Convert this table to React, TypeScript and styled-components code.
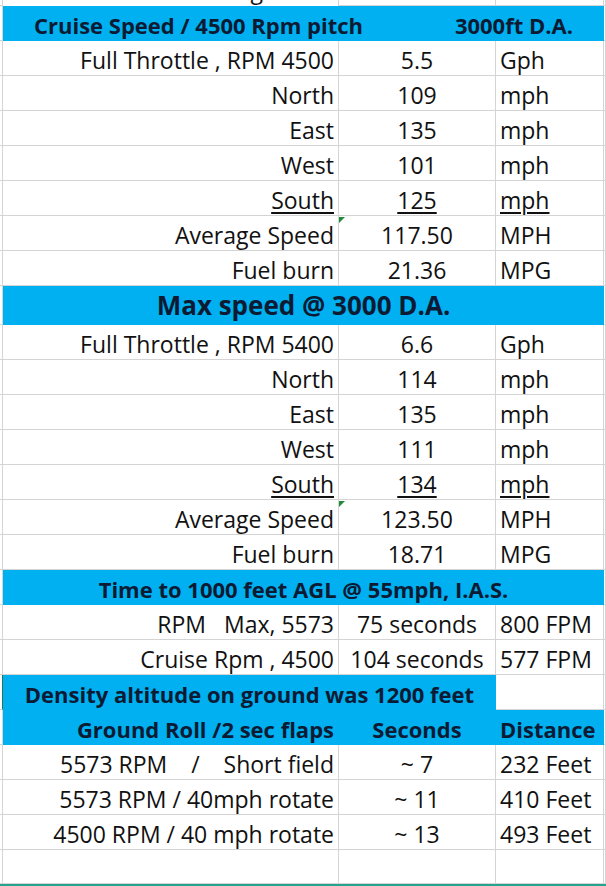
import styled, { createGlobalStyle, css } from "styled-components";

const GRID = "#d4d4d4";
const BLUE = "#00b0f0";
const INK = "#0c1b33";

type Align = "left" | "center" | "right";
type Line = { a: string; b: string; c: string; under?: boolean; flag?: boolean };

const cruise: Line[] = [
  { a: "Full Throttle , RPM 4500", b: "5.5", c: "Gph" },
  { a: "North", b: "109", c: "mph" },
  { a: "East", b: "135", c: "mph" },
  { a: "West", b: "101", c: "mph" },
  { a: "South", b: "125", c: "mph", under: true },
  { a: "Average Speed", b: "117.50", c: "MPH", flag: true },
  { a: "Fuel burn", b: "21.36", c: "MPG" },
];

const maxSpeed: Line[] = [
  { a: "Full Throttle , RPM 5400", b: "6.6", c: "Gph" },
  { a: "North", b: "114", c: "mph" },
  { a: "East", b: "135", c: "mph" },
  { a: "West", b: "111", c: "mph" },
  { a: "South", b: "134", c: "mph", under: true },
  { a: "Average Speed", b: "123.50", c: "MPH", flag: true },
  { a: "Fuel burn", b: "18.71", c: "MPG" },
];

const climb: Line[] = [
  { a: "RPM   Max, 5573", b: "75 seconds", c: "800 FPM" },
  { a: "Cruise Rpm , 4500", b: "104 seconds", c: "577 FPM" },
];

const roll: Line[] = [
  { a: "5573 RPM    /    Short field", b: "~ 7", c: "232 Feet" },
  { a: "5573 RPM / 40mph rotate", b: "~ 11", c: "410 Feet" },
  { a: "4500 RPM / 40 mph rotate", b: "~ 13", c: "493 Feet" },
];

const GlobalStyle = createGlobalStyle`
  *, *::before, *::after { box-sizing: border-box; }
  html, body { margin: 0; padding: 0; background: #fff; }
  body { font-family: "Open Sans", "Liberation Sans", sans-serif; }
`;

const Sheet = styled.div`
  width: 606px;
  height: 886px;
  overflow: hidden;
  color: #111;
  font-family: "Open Sans", "Liberation Sans", sans-serif;
`;

const Row = styled.div<{ $h?: number; $last?: boolean }>`
  display: grid;
  grid-template-columns: 3px 336px 157px 108px 2px;
  height: ${({ $h }) => $h ?? 35}px;
  ${({ $last }) =>
    $last &&
    css`
      border-bottom: 2px solid #25a38f;
    `}
`;

const Edge = styled.div<{ $mark?: boolean }>`
  border-right: 1px solid ${({ $mark }) => ($mark ? "#1d7a4c" : GRID)};
  border-bottom: 1px solid ${GRID};
`;

const justify = (a: Align) => (a === "left" ? "flex-start" : a === "right" ? "flex-end" : "center");

const Cell = styled.div<{ $align: Align; $head?: boolean; $under?: boolean; $flag?: boolean }>`
  position: relative;
  display: flex;
  align-items: flex-end;
  justify-content: ${({ $align }) => justify($align)};
  padding: 0 4px 3.5px 4px;
  border-right: 1px solid ${GRID};
  border-bottom: 1px solid ${GRID};
  font-size: 23px;
  line-height: 23px;
  white-space: pre;

  ${({ $head }) =>
    $head &&
    css`
      background: ${BLUE};
      border-color: ${BLUE};
      color: ${INK};
      font-weight: 700;
      font-size: 22px;
      line-height: 22px;
      padding-bottom: 4.5px;
    `}

  ${({ $under }) =>
    $under &&
    css`
      text-decoration: underline;
      text-decoration-thickness: 2px;
      text-underline-offset: 3px;
    `}

  ${({ $flag }) =>
    $flag &&
    css`
      &::before {
        content: "";
        position: absolute;
        top: 1px;
        left: 0;
        border-top: 6px solid #1f8a3a;
        border-right: 6px solid transparent;
      }
    `}
`;

const Peek = styled(Cell)`
  align-items: flex-start;
  overflow: hidden;
  border-bottom: none;
  padding-right: 75px;
`;

const PeekText = styled.span`
  margin-top: -21px;
`;

const Band = styled.div<{ $span: string; $align: Align; $size?: number; $pad?: number }>`
  grid-column: ${({ $span }) => $span};
  display: flex;
  align-items: flex-end;
  justify-content: ${({ $align }) => ($align === "left" ? "space-between" : justify($align))};
  padding: 0 ${({ $pad }) => $pad ?? 0}px ${({ $size }) => (($size ?? 22) > 23 ? 7 : 5)}px;
  background: ${BLUE};
  color: ${INK};
  font-weight: 700;
  font-size: ${({ $size }) => $size ?? 22}px;
  line-height: ${({ $size }) => $size ?? 22}px;
  white-space: pre;
`;

const DataRow = ({ line }: { line: Line }) => (
  <Row>
    <Edge />
    <Cell $align="right" $under={line.under}>
      {line.a}
    </Cell>
    <Cell $align="center" $under={line.under} $flag={line.flag}>
      {line.b}
    </Cell>
    <Cell $align="left" $under={line.under}>
      {line.c}
    </Cell>
    <Edge />
  </Row>
);

export default function App() {
  return (
    <>
      <GlobalStyle />
      <Sheet>
        <Row $h={6}>
          <Edge />
          <Peek $align="right">
            <PeekText>Climb testing</PeekText>
          </Peek>
          <Cell $align="center" />
          <Cell $align="left" />
          <Edge />
        </Row>

        <Row>
          <Edge />
          <Band $span="2 / 5" $align="left" $pad={31}>
            <span>Cruise Speed / 4500 Rpm pitch</span>
            <span>3000ft D.A.</span>
          </Band>
          <Edge />
        </Row>
        {cruise.map((l, i) => (
          <DataRow key={"c" + i} line={l} />
        ))}

        <Row $h={39}>
          <Edge />
          <Band $span="2 / 5" $align="center" $size={26}>
            Max speed @ 3000 D.A.
          </Band>
          <Edge />
        </Row>
        {maxSpeed.map((l, i) => (
          <DataRow key={"m" + i} line={l} />
        ))}

        <Row>
          <Edge />
          <Band $span="2 / 5" $align="center">
            Time to 1000 feet AGL @ 55mph, I.A.S.
          </Band>
          <Edge />
        </Row>
        {climb.map((l, i) => (
          <DataRow key={"t" + i} line={l} />
        ))}

        <Row>
          <Edge $mark />
          <Band $span="2 / 4" $align="center">
            Density altitude on ground was 1200 feet
          </Band>
          <Cell $align="left" />
          <Edge />
        </Row>
        <Row>
          <Edge />
          <Cell $head $align="right">
            Ground Roll /2 sec flaps
          </Cell>
          <Cell $head $align="center">
            Seconds
          </Cell>
          <Cell $head $align="left">
            Distance
          </Cell>
          <Edge />
        </Row>
        {roll.map((l, i) => (
          <DataRow key={"r" + i} line={l} />
        ))}
        <Row $h={36} $last>
          <Edge />
          <Cell $align="right" />
          <Cell $align="center" />
          <Cell $align="left" />
          <Edge />
        </Row>
      </Sheet>
    </>
  );
}
